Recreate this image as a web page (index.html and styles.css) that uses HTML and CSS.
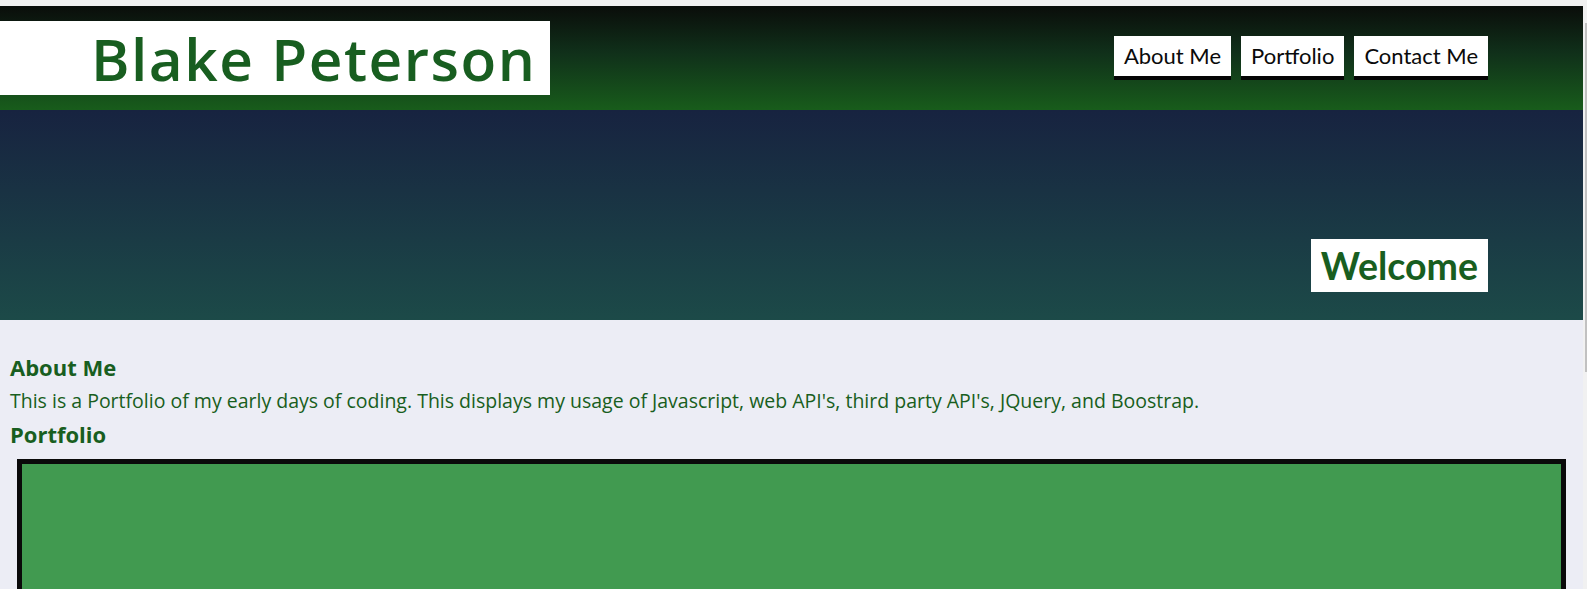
FILE: index.html
```html
<!DOCTYPE html>
<html lang="en">
<head>
<meta charset="utf-8">
<title>Blake Peterson - Portfolio</title>
<link rel="stylesheet" href="styles.css">
</head>
<body>
<div class="window">
  <div class="window-top"></div>
  <div class="viewport">
    <div class="page">
      <header class="site-header">
        <h1 class="name">Blake Peterson</h1>
        <nav class="nav">
          <a class="nav-link" href="#about">About Me</a>
          <a class="nav-link" href="#portfolio">Portfolio</a>
          <a class="nav-link" href="#contact">Contact Me</a>
        </nav>
      </header>
      <section class="hero">
        <h2 class="welcome">Welcome</h2>
      </section>
      <main class="content">
        <h2 class="section-title" id="about">About Me</h2>
        <p class="about-text">This is a Portfolio of my early days of coding. This displays my usage of Javascript, web API's, third party API's, JQuery, and Boostrap.</p>
        <h2 class="section-title" id="portfolio">Portfolio</h2>
        <div class="portfolio-box"></div>
      </main>
    </div>
    <div class="scrollbar"><div class="scroll-thumb"></div></div>
  </div>
</div>
</body>
</html>
```

FILE: styles.css
```css
html, body {
  margin: 0;
  padding: 0;
  height: 100%;
  overflow: hidden;
}

body {
  font-family: "Open Sans", "Lato", sans-serif;
  background: #f1f1f1;
}

.window {
  display: flex;
  flex-direction: column;
  height: 589px;
}

.window-top {
  height: 6px;
  background: #f1f1f1;
  flex: none;
}

.viewport {
  flex: 1;
  display: flex;
  min-height: 0;
}

.page {
  flex: 1;
  background: #ecedf5;
  display: flex;
  flex-direction: column;
  overflow: hidden;
}

.scrollbar {
  width: 4px;
  flex: none;
  background: #f1f1f1;
  display: flex;
  justify-content: flex-end;
  padding-top: 17px;
}

.scroll-thumb {
  width: 2px;
  height: 349px;
  background: #c1c1c1;
}

/* Header */
.site-header {
  height: 104px;
  flex: none;
  display: flex;
  justify-content: space-between;
  align-items: flex-start;
  padding-right: 95px;
  background: linear-gradient(to bottom, #0a0d0a 0%, #10301a 45%, #185c1b 100%);
}

.name {
  margin: 15px 0 0 0;
  height: 74px;
  line-height: 74px;
  padding: 0 14px 0 91px;
  background: #ffffff;
  color: #185e20;
  font-size: 58.5px;
  font-weight: 600;
  letter-spacing: 1.5px;
  white-space: nowrap;
}

.nav {
  display: flex;
  gap: 10px;
  margin-top: 30px;
}

.nav-link {
  display: block;
  height: 40px;
  line-height: 40px;
  padding: 0 10px;
  background: #ffffff;
  color: #0a0a0a;
  text-decoration: none;
  font-family: "Lato", sans-serif;
  font-size: 22px;
  box-shadow: 0 4px 0 #050505;
}

/* Hero */
.hero {
  height: 210px;
  flex: none;
  box-sizing: border-box;
  display: flex;
  justify-content: flex-end;
  align-items: flex-end;
  padding: 0 95px 28px 0;
  background: linear-gradient(to bottom, #172340 0%, #1c4a48 100%);
}

.welcome {
  margin: 0;
  height: 53px;
  line-height: 53px;
  padding: 0 10px;
  background: #ffffff;
  color: #185e20;
  font-family: "Lato", sans-serif;
  font-size: 37.5px;
  font-weight: 700;
}

/* Content */
.content {
  padding: 34px 0 0 10px;
  color: #185e20;
}

.section-title {
  margin: 0;
  font-size: 22px;
  line-height: 26px;
  font-weight: 700;
}

.about-text {
  margin: 10px 0 9px 0;
  font-size: 19.5px;
  line-height: 22px;
}

.portfolio-box {
  margin: 12px 17px 0 7px;
  height: 300px;
  background: #419a50;
  border: 5px solid #0a0a0a;
}
```
